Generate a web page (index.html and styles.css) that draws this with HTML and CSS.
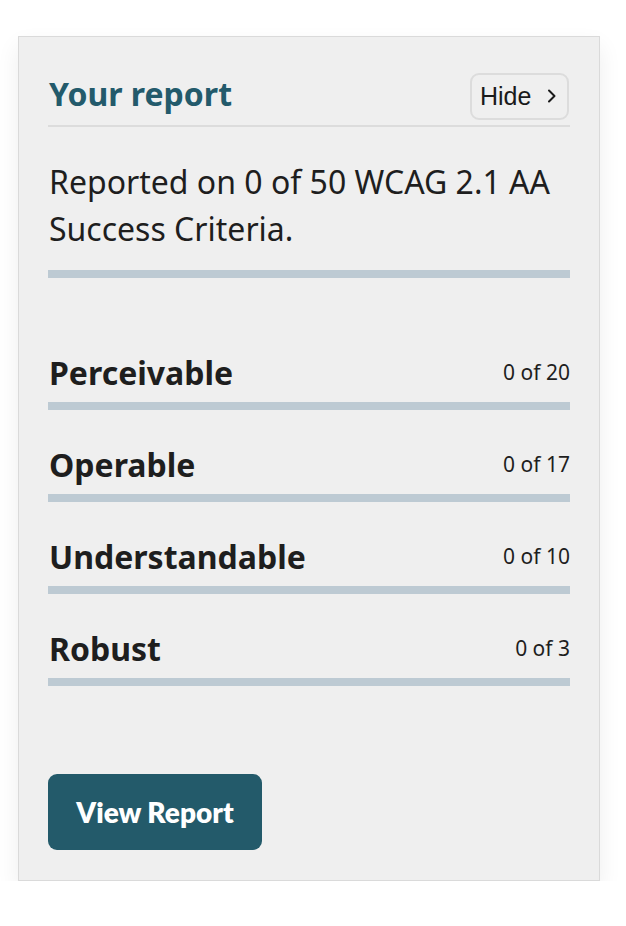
FILE: index.html
```html
<!DOCTYPE html>
<html lang="en">
<head>
<meta charset="utf-8">
<title>Your report</title>
<link rel="stylesheet" href="styles.css">
</head>
<body>
<aside class="card">
  <header class="card-head">
    <h2 class="title">Your report</h2>
    <button class="hide-btn" type="button">Hide <svg class="chev" width="10" height="16" viewBox="0 0 10 16" aria-hidden="true"><path d="M2 2.5 L7.5 8 L2 13.5" fill="none" stroke="#1a1a1a" stroke-width="2" stroke-linecap="round" stroke-linejoin="round"/></svg></button>
  </header>
  <p class="summary">Reported on 0 of 50 WCAG 2.1 AA Success Criteria.</p>
  <div class="bar summary-bar"></div>
  <ul class="principles">
    <li class="principle">
      <div class="row"><h3 class="name">Perceivable</h3><span class="count">0 of 20</span></div>
      <div class="bar"></div>
    </li>
    <li class="principle">
      <div class="row"><h3 class="name">Operable</h3><span class="count">0 of 17</span></div>
      <div class="bar"></div>
    </li>
    <li class="principle">
      <div class="row"><h3 class="name">Understandable</h3><span class="count">0 of 10</span></div>
      <div class="bar"></div>
    </li>
    <li class="principle">
      <div class="row"><h3 class="name">Robust</h3><span class="count">0 of 3</span></div>
      <div class="bar"></div>
    </li>
  </ul>
  <button class="view-btn" type="button">View Report</button>
</aside>
</body>
</html>
```

FILE: styles.css
```css
* { box-sizing: border-box; }
html, body { margin: 0; padding: 0; background: #ffffff; }
body {
  font-family: "Noto Sans", "Open Sans", sans-serif;
  color: #1e1e1e;
  padding: 36px 0 0 18px;
}
.card {
  width: 582px;
  background: #efefef;
  border: 1px solid #dadada;
  box-shadow: 0 10px 22px rgba(0, 0, 0, 0.07);
  padding: 36px 29px 30px;
  display: flex;
  flex-direction: column;
  align-items: flex-start;
}
.card-head {
  width: 100%;
  display: flex;
  justify-content: space-between;
  align-items: center;
  padding-bottom: 5px;
  border-bottom: 2px solid #dcdcdc;
}
.title {
  margin: 0;
  font-size: 32px;
  line-height: 40px;
  font-weight: 700;
  color: #235a6b;
  padding: 0 0 6px 1px;
}
.hide-btn {
  height: 47px;
  width: 99px;
  margin-right: 1px;
  border: 2px solid #dcdcdc;
  border-radius: 9px;
  background: #efefef;
  font-family: "Liberation Sans", Arial, sans-serif;
  font-size: 25px;
  color: #1a1a1a;
  padding: 0 0 0 8px;
  display: flex;
  align-items: center;
  gap: 16px;
}
.chev { display: block; margin-top: -1px; }
.summary {
  margin: 31px 0 0;
  font-size: 32px;
  line-height: 47px;
  padding-left: 1px;
}
.bar {
  width: 100%;
  height: 8px;
  background: #bdcad3;
}
.summary-bar { margin-top: 18px; }
.principles {
  list-style: none;
  margin: 77px 0 0;
  padding: 0;
  width: 100%;
  display: flex;
  flex-direction: column;
  gap: 37px;
}
.row {
  display: flex;
  justify-content: space-between;
  align-items: center;
  margin-bottom: 11px;
}
.name {
  margin: 0;
  font-size: 32px;
  line-height: 36px;
  font-weight: 700;
  padding-left: 1px;
}
.count {
  font-size: 21px;
  line-height: 26px;
  position: relative;
  top: -1px;
}
.view-btn {
  margin-top: 88px;
  height: 76px;
  width: 214px;
  border: 0;
  border-radius: 9px;
  background: #235a6a;
  color: #ffffff;
  font-family: Lato, "Noto Sans", sans-serif;
  font-size: 28px;
  font-weight: 800;
  padding: 0;
}
```
